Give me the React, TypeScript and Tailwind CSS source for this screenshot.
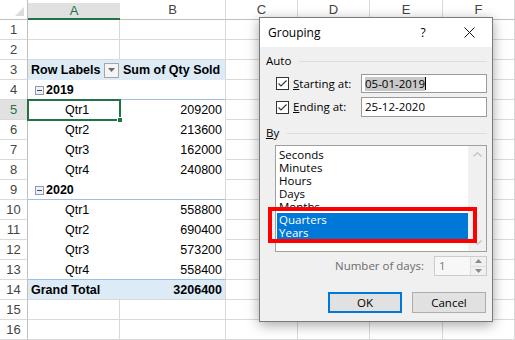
import React from "react";

type Kind = "empty" | "header" | "year" | "qtr" | "total";
type Row = { n: number; kind: Kind; a?: string; b?: string; line?: boolean };

const rows: Row[] = [
  { n: 1, kind: "empty" },
  { n: 2, kind: "empty" },
  { n: 3, kind: "header" },
  { n: 4, kind: "year", a: "2019" },
  { n: 5, kind: "qtr", a: "Qtr1", b: "209200" },
  { n: 6, kind: "qtr", a: "Qtr2", b: "213600" },
  { n: 7, kind: "qtr", a: "Qtr3", b: "162000" },
  { n: 8, kind: "qtr", a: "Qtr4", b: "240800" },
  { n: 9, kind: "year", a: "2020" },
  { n: 10, kind: "qtr", a: "Qtr1", b: "558800" },
  { n: 11, kind: "qtr", a: "Qtr2", b: "690400" },
  { n: 12, kind: "qtr", a: "Qtr3", b: "573200" },
  { n: 13, kind: "qtr", a: "Qtr4", b: "558400", line: true },
  { n: 14, kind: "total", a: "Grand Total", b: "3206400" },
  { n: 15, kind: "empty" },
  { n: 16, kind: "empty" },
];

function MinusBox() {
  return (
    <svg width="9" height="9" viewBox="0 0 9 9" className="shrink-0">
      <rect x="0.5" y="0.5" width="8" height="8" fill="#eef2f8" stroke="#8f9bab" />
      <line x1="2" y1="4.5" x2="7" y2="4.5" stroke="#3c4a5c" strokeWidth="1" />
    </svg>
  );
}

function CellA({ r }: { r: Row }) {
  if (r.kind === "empty")
    return <div className="w-[92px] shrink-0 border-r border-b border-[#d9d9d9]" />;
  if (r.kind === "header")
    return (
      <div className="w-[92px] shrink-0 bg-[#ddebf7] border-b border-b-[#ddebf7] flex items-center pl-[3px] pt-[1px] font-bold text-black">
        <span>Row Labels</span>
        <div className="ml-auto mr-[1px] w-[15px] h-[15px] border border-[#a6a6a6] bg-[#f4f4f4] flex items-center justify-center">
          <svg width="7" height="4" viewBox="0 0 7 4">
            <path d="M0 0 L7 0 L3.5 4 Z" fill="#6b6b6b" />
          </svg>
        </div>
      </div>
    );
  if (r.kind === "year")
    return (
      <div className="w-[92px] shrink-0 border-b border-b-[#9bc2e6] flex items-center pl-[7px] pt-[1px] font-bold text-black">
        <MinusBox />
        <span className="ml-[2px]">{r.a}</span>
      </div>
    );
  if (r.kind === "qtr")
    return (
      <div
        className={`w-[92px] shrink-0 border-b flex items-center pl-[37px] pt-[1px] text-black ${
          r.line ? "border-b-[#9bc2e6]" : "border-b-white"
        }`}
      >
        {r.a}
      </div>
    );
  return (
    <div className="w-[92px] shrink-0 bg-[#ddebf7] border-b border-b-[#d9d9d9] flex items-center pl-[3px] pt-[1px] font-bold text-black">
      {r.a}
    </div>
  );
}

function CellB({ r }: { r: Row }) {
  if (r.kind === "empty")
    return <div className="w-[106px] shrink-0 border-r border-b border-[#d9d9d9]" />;
  if (r.kind === "header")
    return (
      <div className="w-[106px] shrink-0 bg-[#ddebf7] border-r border-r-[#d9d9d9] border-b border-b-[#ddebf7] flex items-center pl-[3px] pt-[1px] font-bold text-black whitespace-nowrap">
        Sum of Qty Sold
      </div>
    );
  if (r.kind === "year")
    return <div className="w-[106px] shrink-0 border-r border-r-[#d9d9d9] border-b border-b-[#9bc2e6]" />;
  if (r.kind === "qtr")
    return (
      <div
        className={`w-[106px] shrink-0 border-r border-r-[#d9d9d9] border-b flex items-center justify-end pr-[3px] pt-[1px] text-black ${
          r.line ? "border-b-[#9bc2e6]" : "border-b-white"
        }`}
      >
        {r.b}
      </div>
    );
  return (
    <div className="w-[106px] shrink-0 bg-[#ddebf7] border-r border-r-[#d9d9d9] border-b border-b-[#d9d9d9] flex items-center justify-end pr-[3px] pt-[1px] font-bold text-black">
      {r.b}
    </div>
  );
}

function CheckBox() {
  return (
    <svg width="13" height="13" viewBox="0 0 13 13" className="shrink-0">
      <rect x="0.5" y="0.5" width="12" height="12" fill="#fff" stroke="#333" />
      <path d="M2.5 6.5 L5 9 L10.5 3.5" fill="none" stroke="#333" strokeWidth="1.1" />
    </svg>
  );
}

function Dialog() {
  const items = ["Seconds", "Minutes", "Hours", "Days", "Months", "Quarters", "Years"];
  return (
    <div className="absolute left-[259px] top-[17px] w-[234px] h-[305px] border border-[#7a7a7a] bg-[#f0f0f0] shadow-[0_3px_12px_rgba(0,0,0,0.35)] font-['Segoe_UI','Open_Sans',sans-serif] text-[11.5px] text-black flex flex-col">
      <div className="h-[29px] bg-white flex items-center shrink-0">
        <span className="pl-[8px] text-[12px]">Grouping</span>
        <div className="ml-auto w-[46px] h-full flex items-center justify-center text-[12px]">?</div>
        <div className="w-[46px] h-full flex items-center justify-center">
          <svg width="11" height="11" viewBox="0 0 11 11">
            <path d="M0.5 0.5 L10.5 10.5 M10.5 0.5 L0.5 10.5" stroke="#111" strokeWidth="1" />
          </svg>
        </div>
      </div>
      <div className="flex flex-col pl-[6px] pr-[5px]">
        <div className="mt-[6px] h-[16px] flex items-center">
          <span>Auto</span>
          <div className="ml-[8px] flex-1 h-px bg-[#dcdcdc]" />
        </div>
        <div className="mt-[5px] h-[19px] flex items-center">
          <div className="ml-[10px]"><CheckBox /></div>
          <span className="ml-[4px]"><span className="underline">S</span>tarting at:</span>
          <div className="ml-auto w-[126px] h-[19px] border border-[#9a9a9a] bg-white flex items-center pl-[3px]">
            <span className="bg-[#c8c8c8] leading-[14px]">05-01-2019</span>
            <span className="w-px h-[13px] bg-black" />
          </div>
        </div>
        <div className="mt-[4px] h-[20px] flex items-center">
          <div className="ml-[10px]"><CheckBox /></div>
          <span className="ml-[4px]"><span className="underline">E</span>nding at:</span>
          <div className="ml-auto w-[126px] h-[20px] border border-[#9a9a9a] bg-white flex items-center pl-[3px]">
            25-12-2020
          </div>
        </div>
        <div className="mt-[8px] h-[16px] flex items-center">
          <span><span className="underline">B</span>y</span>
          <div className="ml-[8px] flex-1 h-px bg-[#dcdcdc]" />
        </div>
        <div className="relative mt-[4px] ml-[9px] w-[212px] h-[107px] border border-[#a0a0a0] bg-white flex">
          <div className="ml-[1px] w-[191px] pt-[2px] flex flex-col">
            {items.map((it) => {
              const sel = it === "Quarters" || it === "Years";
              return (
                <div
                  key={it}
                  className={`h-[13px] leading-[13px] pl-[2px] ${sel ? "bg-[#0078d7] text-white" : "text-black"}`}
                >
                  {it}
                </div>
              );
            })}
          </div>
          <div className="ml-auto w-[18px] h-full bg-[#f0f0f0] flex flex-col items-center justify-between py-[6px]">
            <svg width="9" height="5" viewBox="0 0 9 5">
              <path d="M0.5 4.5 L4.5 0.8 L8.5 4.5" fill="none" stroke="#c2c2c2" strokeWidth="1.3" />
            </svg>
            <svg width="9" height="5" viewBox="0 0 9 5">
              <path d="M0.5 0.5 L4.5 4.2 L8.5 0.5" fill="none" stroke="#c2c2c2" strokeWidth="1.3" />
            </svg>
          </div>
          <div className="absolute left-[-8px] top-[61px] w-[209px] h-[36px] border-[4px] border-[#ff0000] pointer-events-none" />
        </div>
        <div className="mt-[4px] h-[20px] flex items-center justify-end">
          <span className="text-[#6d6d6d] mr-[10px]">Number of days:</span>
          <div className="w-[53px] h-[20px] border border-[#cccccc] bg-[#f7f7f7] flex items-center">
            <span className="pl-[4px] text-[#7a7a7a]">1</span>
            <div className="ml-auto w-[16px] h-full flex flex-col border-l border-[#dddddd]">
              <div className="flex-1 flex items-center justify-center bg-[#f0f0f0] border-b border-[#dddddd]">
                <svg width="7" height="4" viewBox="0 0 7 4"><path d="M0 4 L3.5 0 L7 4 Z" fill="#8a8a8a" /></svg>
              </div>
              <div className="flex-1 flex items-center justify-center bg-[#f0f0f0]">
                <svg width="7" height="4" viewBox="0 0 7 4"><path d="M0 0 L7 0 L3.5 4 Z" fill="#8a8a8a" /></svg>
              </div>
            </div>
          </div>
        </div>
        <div className="mt-[16px] flex justify-end gap-[10px] pr-[1px]">
          <div className="w-[74px] h-[21px] border-2 border-[#0078d7] bg-[#e1e1e1] flex items-center justify-center">OK</div>
          <div className="w-[74px] h-[21px] border border-[#adadad] bg-[#e1e1e1] flex items-center justify-center">Cancel</div>
        </div>
      </div>
    </div>
  );
}

export default function App() {
  const cols = ["C", "D", "E", "F"];
  const colW = ["w-[72px]", "w-[72px]", "w-[73px]", "w-[72px]"];
  return (
    <div className="relative w-[515px] h-[340px] overflow-hidden bg-white font-['Liberation_Sans',Arial,sans-serif] text-[12.5px]">
      <div className="flex h-[20px]">
        <div className="w-[28px] shrink-0 border-r border-b border-[#bfbfbf] flex items-end justify-end pr-[3px] pb-[3px]">
          <svg width="9" height="9" viewBox="0 0 9 9">
            <path d="M9 0 L9 9 L0 9 Z" fill="#dcdcdc" />
          </svg>
        </div>
        <div className="w-[92px] shrink-0 bg-[#e1e1e1] border-t-[3px] border-t-white border-b-2 border-b-[#217346] flex items-center justify-center text-[13px] text-[#217346]">
          A
        </div>
        <div className="w-[106px] shrink-0 border-r border-[#d9d9d9] border-b border-b-[#bfbfbf] flex items-center justify-center text-[13px] text-[#444]">
          B
        </div>
        {cols.map((c, i) => (
          <div
            key={c}
            className={`${colW[i]} shrink-0 border-r border-[#d9d9d9] border-b border-b-[#bfbfbf] flex items-center justify-center text-[13px] text-[#444]`}
          >
            {c}
          </div>
        ))}
      </div>
      {rows.map((r) => (
        <div key={r.n} className="flex h-[20px]">
          <div
            className={`w-[28px] shrink-0 border-r border-r-[#bfbfbf] border-b border-b-[#d9d9d9] flex items-center justify-center pt-[1px] text-[13px] ${
              r.n === 5 ? "bg-[#e1e1e1] text-[#217346]" : "text-[#444]"
            }`}
          >
            {r.n}
          </div>
          <CellA r={r} />
          <CellB r={r} />
          {cols.map((c, i) => (
            <div key={c} className={`${colW[i]} shrink-0 border-r border-b border-[#d9d9d9]`} />
          ))}
        </div>
      ))}
      <div className="absolute left-[27px] top-[99px] w-[94px] h-[22px] border-2 border-[#217346] pointer-events-none">
        <div className="absolute right-[-4px] bottom-[-4px] w-[6px] h-[6px] bg-[#217346] border border-white" />
      </div>
      <Dialog />
    </div>
  );
}
